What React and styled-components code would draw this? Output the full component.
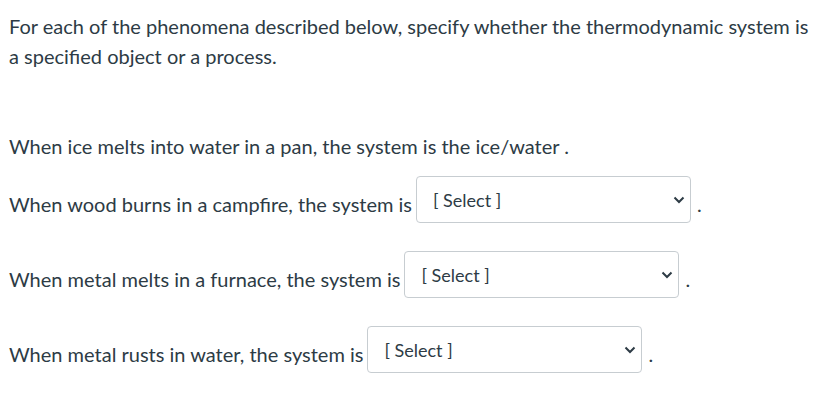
import React from "react";
import styled, { createGlobalStyle } from "styled-components";

const GlobalStyle = createGlobalStyle`
  html, body {
    margin: 0;
    padding: 0;
    background: #ffffff;
  }
  body {
    font-family: Lato, "Open Sans", sans-serif;
    color: #2d3b45;
  }
`;

const Page = styled.div`
  padding: 11px 9px 0 9px;
  font-size: 20px;
`;

const Intro = styled.p`
  margin: 0 0 60px 0;
  line-height: 30px;
`;

const Line = styled.p`
  margin: 0 0 ${({ gap }) => gap}px 0;
  line-height: 30px;
  display: flex;
  align-items: center;
  white-space: pre;
`;

const Label = styled.span`
  padding-top: ${({ drop }) => drop || 0}px;
`;

const SelectBox = styled.div`
  box-sizing: border-box;
  width: 275px;
  height: 47px;
  margin: 1px 0 0 4px;
  border: 1px solid #c7cdd1;
  border-radius: 4px;
  background: #fff;
  display: flex;
  align-items: center;
  justify-content: space-between;
  padding: 0 5px 0 16px;
  font-size: 18px;
  color: #2d3b45;
`;

const Chevron = () => (
  <svg width="12" height="8" viewBox="0 0 12 8">
    <path d="M1.5 1.5 L6 6 L10.5 1.5" fill="none" stroke="#2d3b45" strokeWidth="2" />
  </svg>
);

const Dot = styled.span`
  margin-left: 6px;
  padding-top: 9px;
`;

const Select = () => (
  <SelectBox>
    <span>[ Select ]</span>
    <Chevron />
  </SelectBox>
);

const rows = [
  "When wood burns in a campfire, the system is",
  "When metal melts in a furnace, the system is",
  "When metal rusts in water, the system is",
];

export default function App() {
  return (
    <>
      <GlobalStyle />
      <Page>
        <Intro>
          For each of the phenomena described below, specify whether the thermodynamic system is
          a specified object or a process.
        </Intro>
        <Line gap={14}>When ice melts into water in a pan, the system is the ice/water .</Line>
        {rows.map((r) => (
          <Line key={r} gap={27}>
            <Label drop={9}>{r}</Label>
            <Select />
            <Dot>.</Dot>
          </Line>
        ))}
      </Page>
    </>
  );
}
